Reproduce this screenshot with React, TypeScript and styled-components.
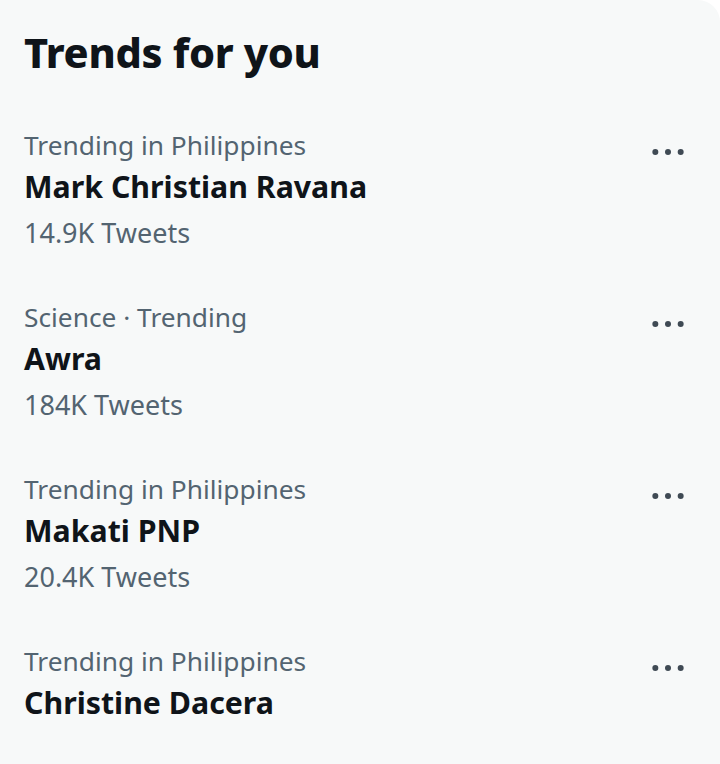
import styled, { createGlobalStyle } from "styled-components"

const Global = createGlobalStyle`
    html, body {
        margin: 0;
        padding: 0;
        background: #ffffff;
    }
    body {
        font-family: "Noto Sans", "Open Sans", sans-serif;
    }
`

const Panel = styled.section`
    width: 720px;
    min-height: 764px;
    background: #f7f9f9;
    border-top-right-radius: 22px;
    box-sizing: border-box;
`

const Header = styled.h2`
    margin: 0;
    padding: 28px 24px 37px;
    font-size: 41.4px;
    line-height: 48px;
    font-weight: 800;
    color: #0f1419;
    letter-spacing: -0.3px;
`

const List = styled.ul`
    list-style: none;
    margin: 0;
    padding: 0;
`

const Item = styled.li`
    display: flex;
    justify-content: space-between;
    align-items: flex-start;
    padding: 16px 32px 36px 24px;
`

const Info = styled.div`
    display: flex;
    flex-direction: column;
`

const Category = styled.span`
    font-size: 26.3px;
    line-height: 32px;
    color: #536471;
`

const Name = styled.span`
    margin-top: 6px;
    font-size: 30.3px;
    line-height: 40px;
    font-weight: 700;
    color: #0f1419;
`

const Count = styled.span`
    margin-top: 10px;
    font-size: 27px;
    line-height: 32px;
    color: #536471;
`

const More = styled.button`
    border: none;
    background: transparent;
    padding: 0;
    margin-top: 3px;
    width: 40px;
    height: 40px;
    display: flex;
    align-items: center;
    justify-content: center;
    color: #3f4a54;
`

const trends = [
    { id: 1, category: "Trending in Philippines", name: "Mark Christian Ravana", count: "14.9K Tweets" },
    { id: 2, category: "Science · Trending", name: "Awra", count: "184K Tweets" },
    { id: 3, category: "Trending in Philippines", name: "Makati PNP", count: "20.4K Tweets" },
    { id: 4, category: "Trending in Philippines", name: "Christine Dacera", count: "" },
]

const App = function () {
    return (
        <>
            <Global />
            <Panel>
                <Header>Trends for you</Header>
                <List>
                    {trends.map((t) => (
                        <Item key={t.id}>
                            <Info>
                                <Category>{t.category}</Category>
                                <Name>{t.name}</Name>
                                {t.count && <Count>{t.count}</Count>}
                            </Info>
                            <More aria-label="More">
                                <svg width="40" height="40" viewBox="0 0 24 24" fill="currentColor">
                                    <circle cx="4.4" cy="12" r="1.8" />
                                    <circle cx="12" cy="12" r="1.8" />
                                    <circle cx="19.6" cy="12" r="1.8" />
                                </svg>
                            </More>
                        </Item>
                    ))}
                </List>
            </Panel>
        </>
    )
}

export default App
